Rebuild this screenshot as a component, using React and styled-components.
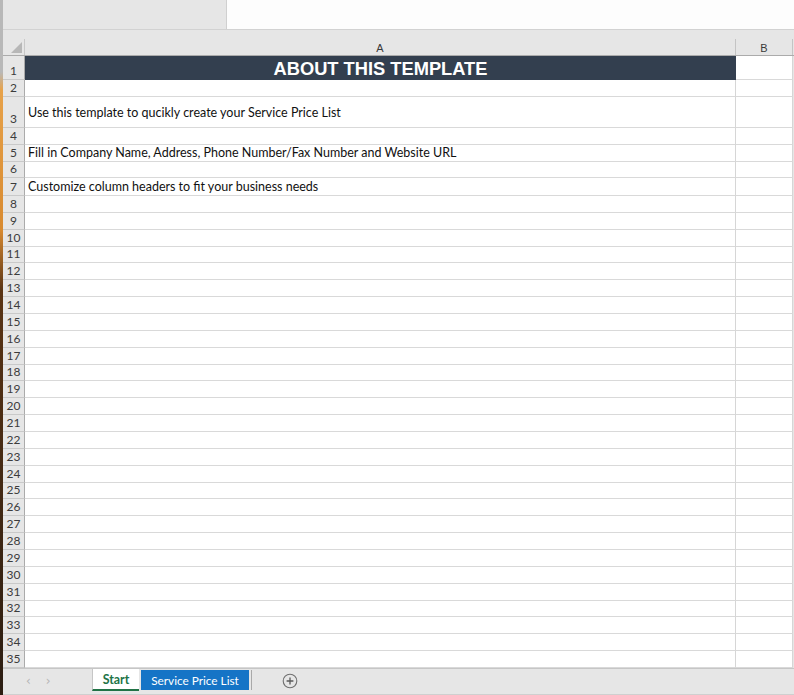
import React from "react";
import styled, { createGlobalStyle } from "styled-components";

const GlobalStyle = createGlobalStyle`
  html, body {
    margin: 0;
    padding: 0;
    background: #e6e6e6;
    overflow: hidden;
  }
  * { box-sizing: border-box; }
`;

const Window = styled.div`
  display: flex;
  width: 794px;
  height: 695px;
  font-family: "Lato", "Liberation Sans", sans-serif;
`;

// strip of desktop showing at the left edge
const EdgeStrip = styled.div`
  width: 3px;
  flex: none;
  background: linear-gradient(
    to bottom,
    #b8b8b8 0px,
    #b8b8b8 72px,
    #e7a24a 90px,
    #d88a30 230px,
    #5a3414 290px,
    #2b1d12 695px
  );
`;

const Sheet = styled.div`
  flex: 1;
  display: flex;
  flex-direction: column;
  min-width: 0;
`;

const FormulaArea = styled.div`
  height: 30px;
  flex: none;
  display: flex;
  border-bottom: 1px solid #d2d2d2;
  background: #e6e6e6;
`;

const FormulaBox = styled.div`
  margin-left: 223px;
  flex: 1;
  background: #fdfdfd;
  border-left: 1px solid #d0d0d0;
`;

const ColHeadRow = styled.div`
  display: flex;
  margin-top: 9px;
  height: 17px;
  flex: none;
  border-bottom: 1px solid #ababab;
`;

const Corner = styled.div`
  position: relative;
  width: 22px;
  flex: none;
  border-right: 1px solid #c8c8c8;
  &::after {
    content: "";
    position: absolute;
    right: 2px;
    bottom: 2px;
    width: 0;
    height: 0;
    border-left: 11px solid transparent;
    border-bottom: 11px solid #b7b7b7;
  }
`;

const ColHead = styled.div`
  width: ${(p) => p.$w}px;
  flex: none;
  display: flex;
  align-items: center;
  justify-content: center;
  border-right: 1px solid #c4c4c4;
  font-family: "Liberation Sans", sans-serif;
  font-size: 11px;
  color: #3a3a3a;
  padding-top: 1px;
`;

const Rows = styled.div`
  flex: 1;
  display: flex;
  flex-direction: column;
  min-height: 0;
  background: #fff;
`;

const Row = styled.div`
  display: flex;
  height: ${(p) => p.$h}px;
  flex: none;
`;

const RowHead = styled.div`
  width: 22px;
  flex: none;
  display: flex;
  align-items: flex-end;
  justify-content: center;
  padding-bottom: 1px;
  background: #e6e6e6;
  border-right: 1px solid #ababab;
  border-bottom: 1px solid #c9c9c9;
  font-size: 12px;
  color: #3c3c3c;
  line-height: 14px;
`;

const Cell = styled.div`
  width: ${(p) => p.$w}px;
  flex: none;
  display: flex;
  align-items: ${(p) => (p.$middle ? "center" : "flex-end")};
  padding: 0 0 ${(p) => (p.$middle ? 0 : 1)}px 3px;
  background: #fff;
  border-right: 1px solid #d6d6d6;
  border-bottom: 1px solid #d9d9d9;
  font-size: 12.5px;
  color: #111;
  white-space: nowrap;
  line-height: 15px;
`;

const TitleCell = styled.div`
  width: ${(p) => p.$w}px;
  flex: none;
  display: flex;
  align-items: center;
  justify-content: center;
  background: #333f4f;
  color: #fff;
  font-family: "Liberation Sans", "Arial", sans-serif;
  font-weight: 700;
  font-size: 18.3px;
  padding-top: 1px;
`;

const Filler = styled.div`
  flex: 1;
  background: #e6e6e6;
`;

const TabBar = styled.div`
  height: 27px;
  flex: none;
  display: flex;
  align-items: flex-start;
  border-top: 1px solid #c6c6c6;
  border-bottom: 1px solid #cfcfcf;
  background: #e6e6e6;
`;

const NavArrows = styled.div`
  width: 89px;
  flex: none;
  display: flex;
  gap: 15px;
  padding: 5px 0 0 23px;
  color: #b5b5b5;
  font-size: 12px;
  font-family: "DejaVu Sans", sans-serif;
`;

const Tab = styled.div`
  height: 22px;
  display: flex;
  align-items: center;
  justify-content: center;
  width: ${(p) => p.$w}px;
  margin-right: 2px;
  ${(p) =>
    p.$active
      ? `
    background: #fff;
    color: #217346;
    font-weight: 700;
    font-size: 12.4px;
    border-left: 1px solid #c6c6c6;
    border-bottom: 2px solid #217346;
  `
      : `
    background: #1574c6;
    color: #fff;
    font-size: 11.8px;
    margin-top: 1px;
    height: 20px;
  `}
`;

const TabDivider = styled.div`
  width: 1px;
  height: 20px;
  margin-top: 1px;
  background: #a9a9a9;
`;

const AddSheet = styled.div`
  margin: 4px 0 0 30px;
  display: flex;
`;

const COL_A = 711;
const COL_B = 57;

const texts = {
  3: "Use this template to qucikly create your Service Price List",
  5: "Fill in Company Name, Address, Phone Number/Fax Number and Website URL",
  7: "Customize column headers to fit your business needs",
};

const heights = { 1: 24, 2: 17, 3: 31, 4: 17, 5: 17, 6: 16, 7: 18 };

export default function App() {
  const rows = [];
  for (let i = 1; i <= 35; i++) {
    rows.push({ n: i, h: heights[i] || 16.86 });
  }
  return (
    <>
      <GlobalStyle />
      <Window>
        <EdgeStrip />
        <Sheet>
          <FormulaArea>
            <FormulaBox />
          </FormulaArea>
          <ColHeadRow>
            <Corner />
            <ColHead $w={COL_A}>A</ColHead>
            <ColHead $w={COL_B}>B</ColHead>
            <Filler />
          </ColHeadRow>
          <Rows>
            {rows.map((r) => (
              <Row key={r.n} $h={r.h}>
                <RowHead>{r.n}</RowHead>
                {r.n === 1 ? (
                  <TitleCell $w={COL_A}>ABOUT THIS TEMPLATE</TitleCell>
                ) : (
                  <Cell $w={COL_A} $middle={r.n === 3}>
                    {texts[r.n] || ""}
                  </Cell>
                )}
                <Cell $w={COL_B} />
                <Filler />
              </Row>
            ))}
          </Rows>
          <TabBar>
            <NavArrows>
              <span>‹</span>
              <span>›</span>
            </NavArrows>
            <Tab $active $w={47}>Start</Tab>
            <Tab $w={108}>Service Price List</Tab>
            <TabDivider />
            <AddSheet>
              <svg width="16" height="16" viewBox="0 0 16 16">
                <circle cx="8" cy="8" r="6.8" fill="none" stroke="#6f6f6f" strokeWidth="1.1" />
                <path d="M8 4.6v6.8M4.6 8h6.8" stroke="#5a5a5a" strokeWidth="1.3" />
              </svg>
            </AddSheet>
          </TabBar>
        </Sheet>
      </Window>
    </>
  );
}
